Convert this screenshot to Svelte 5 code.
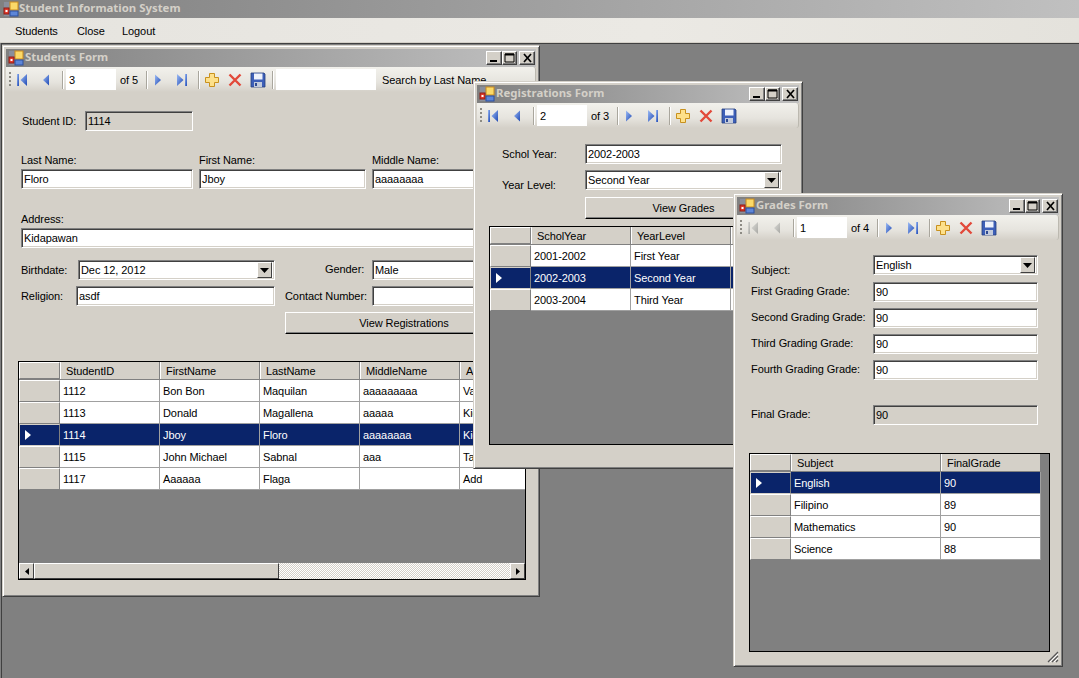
<script>
  const students = {
    cols: [['StudentID', 100], ['FirstName', 100], ['LastName', 100], ['MiddleName', 100], ['Address', 100]],
    rows: [
      ['1112', 'Bon Bon', 'Maquilan', 'aaaaaaaaa', 'Va'],
      ['1113', 'Donald', 'Magallena', 'aaaaa', 'Kidapawan'],
      ['1114', 'Jboy', 'Floro', 'aaaaaaaa', 'Kidapawan'],
      ['1115', 'John Michael', 'Sabnal', 'aaa', 'Ta'],
      ['1117', 'Aaaaaa', 'Flaga', '', 'Add']
    ],
    sel: 2
  };
  const regs = {
    cols: [['ScholYear', 100], ['YearLevel', 100], ['', 100]],
    rows: [
      ['2001-2002', 'First Year', ''],
      ['2002-2003', 'Second Year', ''],
      ['2003-2004', 'Third Year', '']
    ],
    sel: 1
  };
  const grades = {
    cols: [['Subject', 150], ['FinalGrade', 100]],
    rows: [
      ['English', '90'],
      ['Filipino', '89'],
      ['Mathematics', '90'],
      ['Science', '88']
    ],
    sel: 0
  };
  const gradeFields = [
    ['First Grading Grade:', '90', 'g-first'],
    ['Second Grading Grade:', '90', 'g-next'],
    ['Third Grading Grade:', '90', 'g-next'],
    ['Fourth Grading Grade:', '90', 'g-next']
  ];
</script>

{#snippet appIcon()}
  <svg class="appicon" viewBox="0 0 16 16" width="16" height="16">
    <rect x="1" y="1" width="14" height="14" fill="#8a8f9c" />
    <rect x="7" y="1" width="8" height="8" fill="#fbd968" stroke="#c98a1c" />
    <rect x="1" y="7" width="5" height="6" fill="#e23b2c" stroke="#8e1d14" />
    <rect x="7" y="10" width="8" height="5" fill="#5d86d8" stroke="#2c4f9e" />
    <rect x="2.500" y="9" width="2" height="2" fill="#fff" />
  </svg>
{/snippet}

{#snippet nav(kind, off)}
  {@const id = 'b' + kind + (off ? 'o' : 'n')}
  <svg class="tool" viewBox="0 0 16 16" width="16" height="16">
    <defs>
      <linearGradient {id} x1="0" x2="1" y1="0" y2="1">
        <stop offset="0" stop-color={off ? '#dcdcd8' : '#9dbcf5'} />
        <stop offset="1" stop-color={off ? '#a8a8a4' : '#1e48b4'} />
      </linearGradient>
    </defs>
    {#if kind === 'first'}
      <rect x="3" y="2" width="2" height="12" fill="url(#{id})" />
      <path d="M13 2v12L6.500 8z" fill="url(#{id})" />
    {:else if kind === 'prev'}
      <path d="M11 2.500v11L5 8z" fill="url(#{id})" />
    {:else if kind === 'next'}
      <path d="M5 2.500v11L11 8z" fill="url(#{id})" />
    {:else}
      <path d="M3 2v12L9.500 8z" fill="url(#{id})" />
      <rect x="11" y="2" width="2" height="12" fill="url(#{id})" />
    {/if}
  </svg>
{/snippet}

{#snippet actions()}
  <i class="sep"></i>
  <span class="tbtn act add"><svg class="tool" viewBox="0 0 16 16" width="16" height="16">
    <path d="M5.500 1.500h5v4h4v5h-4v4h-5v-4h-4v-5h4z" fill="#fde08a" stroke="#c8911e" />
  </svg></span>
  <span class="tbtn act"><svg class="tool" viewBox="0 0 16 16" width="16" height="16">
    <path d="M2.500 2.500l11 11M13.500 2.500l-11 11" stroke="#e2493a" stroke-width="2.400" fill="none" />
  </svg></span>
  <span class="tbtn act"><svg class="tool" viewBox="0 0 16 16" width="16" height="16">
    <path d="M1 1h13l1 1v13H1z" fill="#3d5fb8" stroke="#27407f" stroke-width=".8" />
    <rect x="4" y="1.500" width="8.500" height="6" fill="#eef2fb" />
    <rect x="4" y="10" width="8" height="5" fill="#c3cbdc" />
    <rect x="5" y="11" width="2" height="3" fill="#2f4a92" />
  </svg></span>
{/snippet}

{#snippet navbar(pos, total, firstOff, extra)}
  <div class="toolbar">
    <i class="grip"></i>
    <span class="tbtn">{@render nav('first', firstOff)}</span>
    <span class="tbtn">{@render nav('prev', firstOff)}</span>
    <i class="sep"></i>
    <span class="pos">{pos}</span>
    <span class="of">of {total}</span>
    <i class="sep"></i>
    <span class="tbtn">{@render nav('next', false)}</span>
    <span class="tbtn">{@render nav('last', false)}</span>
    {@render actions()}
    {#if extra}{@render extra()}{/if}
  </div>
{/snippet}

{#snippet caption(title)}
  <div class="caption">
    {@render appIcon()}
    <span class="captext">{title}</span>
    <span class="capbtns">
      <span class="capbtn wide"><svg viewBox="0 0 13 12" width="13" height="12"><rect x="2" y="8" width="7" height="2" fill="#000" /></svg></span>
      <span class="capbtn"><svg viewBox="0 0 13 12" width="13" height="12"><path d="M2 2h9v8H2z" fill="none" stroke="#000" /><rect x="2" y="1.500" width="9" height="2" fill="#000" /></svg></span>
      <span class="capbtn wide gap"><svg viewBox="0 0 13 12" width="13" height="12"><path d="M3 2l7 8M10 2l-7 8" stroke="#000" stroke-width="1.700" fill="none" /></svg></span>
    </span>
  </div>
{/snippet}

{#snippet combo(text, cls)}
  <div class="sunken combo {cls}">
    <span>{text}</span>
    <span class="arrow"><svg viewBox="0 0 9 5" width="9" height="5"><path d="M0 0h9L4.500 5z" fill="#000" /></svg></span>
  </div>
{/snippet}

{#snippet table(data, cls)}
  <div class="grid {cls}">
    <div class="tr head">
      <div class="rh"></div>
      {#each data.cols as c}
        <div class="th" style="width:{c[1]}px">{c[0]}</div>
      {/each}
    </div>
    {#each data.rows as r, i}
      <div class="tr" class:sel={i === data.sel}>
        <div class="rh">
          {#if i === data.sel}
            <svg viewBox="0 0 6 10" width="6" height="10"><path d="M0 0l6 5-6 5z" fill="#fff" /></svg>
          {/if}
        </div>
        {#each r as v, j}
          <div class="td" style="width:{data.cols[j][1]}px">{v}</div>
        {/each}
      </div>
    {/each}
    {#if cls === 'g-students'}
      <div class="hscroll">
        <span class="sbtn"><svg viewBox="0 0 4 7" width="4" height="7"><path d="M4 0v7L0 3.500z" fill="#000" /></svg></span>
        <span class="thumb"></span>
        <span class="track"></span>
        <span class="sbtn"><svg viewBox="0 0 4 7" width="4" height="7"><path d="M0 0v7l4-3.500z" fill="#000" /></svg></span>
      </div>
    {/if}
  </div>
{/snippet}

{#snippet searchBox()}
  <i class="sep last"></i>
  <span class="pos search"></span>
  <span class="searchlabel">Search by Last Name</span>
{/snippet}

<div class="app">
  <header class="titlebar">
    {@render appIcon()}
    <span class="captext">Student Information System</span>
  </header>
  <nav class="menu">
    <span class="m1">Students</span>
    <span class="m2">Close</span>
    <span class="m3">Logout</span>
  </nav>

  <main class="mdi">
    <section class="win w-students">
      {@render caption('Students Form')}
      {@render navbar(3, 5, false, searchBox)}
      <div class="body">
        <div class="row s1">
          <span class="l-id">Student ID:</span>
          <div class="sunken ro f-id">1114</div>
        </div>
        <div class="row s2">
          <span class="c1">Last Name:</span>
          <span class="c2">First Name:</span>
          <span>Middle Name:</span>
        </div>
        <div class="row s3">
          <div class="sunken f-last">Floro</div>
          <div class="sunken f-first">Jboy</div>
          <div class="sunken f-mid">aaaaaaaa</div>
        </div>
        <div class="row s4"><span>Address:</span></div>
        <div class="row s5"><div class="sunken f-addr">Kidapawan</div></div>
        <div class="row s6">
          <span class="l-birth">Birthdate:</span>
          {@render combo('Dec 12, 2012', 'f-birth')}
          <span class="l-gender up">Gender:</span>
          <div class="sunken f-gender">Male</div>
        </div>
        <div class="row s7">
          <span class="l-rel">Religion:</span>
          <div class="sunken f-rel">asdf</div>
          <span class="l-contact">Contact Number:</span>
          <div class="sunken f-contact"></div>
        </div>
        <div class="row s8"><button class="btn b-reg">View Registrations</button></div>
        {@render table(students, 'g-students')}
      </div>
    </section>

    <section class="win w-regs">
      {@render caption('Registrations Form')}
      {@render navbar(2, 3, false)}
      <div class="body">
        <div class="row r1">
          <span class="l-sy">Schol Year:</span>
          <div class="sunken f-sy">2002-2003</div>
        </div>
        <div class="row r2">
          <span class="l-sy low">Year Level:</span>
          {@render combo('Second Year', 'f-sy')}
        </div>
        <div class="row r3"><button class="btn b-gr">View Grades</button></div>
        {@render table(regs, 'g-regs')}
      </div>
    </section>

    <section class="win w-grades">
      {@render caption('Grades Form')}
      {@render navbar(1, 4, true)}
      <div class="body">
        <div class="row g1">
          <span class="l-g low">Subject:</span>
          {@render combo('English', 'f-g')}
        </div>
        {#each gradeFields as f}
          <div class="row {f[2]}">
            <span class="l-g up">{f[0]}</span>
            <div class="sunken f-g">{f[1]}</div>
          </div>
        {/each}
        <div class="row g-final">
          <span class="l-g up">Final Grade:</span>
          <div class="sunken ro f-g">90</div>
        </div>
        {@render table(grades, 'g-grades')}
        <svg class="sizegrip" viewBox="0 0 13 13" width="13" height="13">
          <path d="M12 2L2 12M12 6L6 12M12 10l-2 2" stroke="#555" stroke-width="1.200" fill="none" />
          <path d="M12 4L4 12M12 8l-4 4" stroke="#fff" stroke-width="1" fill="none" />
        </svg>
      </div>
    </section>
  </main>
</div>

<style>
  :global(body) { margin: 0; background: #808080; }
  .app {
    width: 1079px; height: 678px; display: flex; flex-direction: column; overflow: hidden;
    font-family: "Liberation Sans", Arial, sans-serif; font-size: 11px; letter-spacing: -.08px; color: #000;
  }
  .titlebar {
    height: 18px; flex: none; display: flex; align-items: center; padding-left: 3px; box-sizing: border-box;
    background: linear-gradient(90deg, #808080, #c0c0c0);
  }
  .appicon { flex: none; }
  .captext {
    font-family: "Noto Sans", "DejaVu Sans", sans-serif; font-weight: 700; font-size: 11.4px; color: #d4d0c8;
    white-space: nowrap; padding-bottom: 3px; line-height: 15px; letter-spacing: 0;
  }
  .menu {
    height: 25px; flex: none; box-sizing: border-box; display: flex; align-items: center; padding: 1px 0 0 15px;
    background: linear-gradient(90deg, #e6e4df, #ebe9e4 60%, #e4e2dc); border-bottom: 1px solid #d4d0c8;
  }
  .m1 { width: 62px; }
  .m2 { width: 45px; }
  .mdi {
    flex: 1; position: relative; background: #808080; overflow: hidden;
    border-top: 1px solid #404040; border-left: 1px solid #404040; margin-left: 1px;
  }
  .win {
    position: absolute; box-sizing: border-box; background: #d4d0c8; display: flex; flex-direction: column;
    padding: 3px; border: 1px solid; border-color: #d4d0c8 #404040 #404040 #d4d0c8;
    box-shadow: inset 1px 1px 0 #fff, inset -1px -1px 0 #808080;
  }
  .w-students { left: 0; top: 1px; width: 538px; height: 552px; }
  .w-regs { left: 471px; top: 37px; width: 330px; height: 388px; }
  .w-grades { left: 731px; top: 149px; width: 330px; height: 474px; }
  .caption {
    height: 18px; flex: none; display: flex; align-items: center; gap: 1px; padding-left: 2px;
    background: linear-gradient(90deg, #808080, #c0c0c0);
  }
  .capbtns { margin-left: auto; display: flex; padding-right: 1px; }
  .capbtn {
    width: 15px; height: 14px; box-sizing: border-box; background: #d4d0c8; display: flex;
    align-items: center; justify-content: center; border: 1px solid; border-color: #fff #404040 #404040 #fff;
    box-shadow: inset -1px -1px 0 #808080;
  }
  .capbtn.wide { width: 16px; }
  .capbtn.gap { margin-left: 2px; }
  .toolbar {
    height: 25px; flex: none; box-sizing: border-box; display: flex; align-items: center;
    background: linear-gradient(180deg, #f2f1ec, #e6e4de 60%, #d4d0c8); border-radius: 0 3px 3px 0;
    border-right: 1px solid #bcb9b0; padding-left: 3px;
  }
  .grip {
    width: 2px; height: 16px; margin-right: 3px; flex: none;
    background: repeating-linear-gradient(180deg, #8d8b84 0 2px, transparent 2px 4px);
  }
  .tbtn { width: 16px; height: 22px; margin-right: 8px; display: flex; align-items: center; justify-content: center; flex: none; }
  .tbtn.act { margin-right: 7px; }
  .tbtn.add { margin-left: 2px; }
  .sep { width: 1px; height: 18px; background: #a9a69d; box-shadow: 1px 0 0 #fff; flex: none; margin-right: 3px; }
  .sep.last { margin-left: -1px; }
  .pos {
    width: 50px; height: 21px; box-sizing: border-box; padding: 4px 3px 0; background: #fff; flex: none; line-height: 14px;
  }
  .of { width: 30px; padding-left: 4px; box-sizing: border-box; flex: none; white-space: nowrap; }
  .search { width: 100px; }
  .searchlabel { margin-left: 6px; white-space: nowrap; }

  .body { flex: 1; position: relative; min-height: 0; }
  .row { display: flex; align-items: center; }
  .row > span { white-space: nowrap; flex: none; }
  .low { align-self: flex-end; margin-bottom: -1px; }
  .up { padding-bottom: 2px; }
  .sunken {
    height: 20px; box-sizing: border-box; background: #fff; flex: none; padding: 2px 2px 0; line-height: 14px;
    border: 1px solid; border-color: #808080 #fff #fff #808080; white-space: nowrap; overflow: hidden;
    box-shadow: inset 1px 1px 0 #404040, inset -1px -1px 0 #d4d0c8;
  }
  .sunken.ro { background: #d4d0c8; }
  .combo { display: flex; justify-content: space-between; padding-right: 2px; }
  .arrow {
    width: 15px; height: 16px; box-sizing: border-box; background: #d4d0c8; display: flex; align-items: center; justify-content: center;
    border: 1px solid; border-color: #fff #404040 #404040 #fff; margin-top: -1px;
  }
  .btn {
    height: 22px; box-sizing: border-box; background: #d4d0c8; font: inherit; letter-spacing: inherit; padding: 0; color: #000;
    border: 1px solid; border-color: #fff #000 #000 #fff; box-shadow: inset -1px -1px 0 #808080;
    display: block;
  }

  /* Students form */
  .s1 { padding: 19px 0 0 16px; }
  .l-id { width: 63px; }
  .f-id { width: 108px; }
  .s2 { padding: 22px 0 0 15px; height: 13px; }
  .c1 { width: 178px; }
  .c2 { width: 173px; }
  .s3 { padding: 3px 0 0 15px; }
  .f-last { width: 172px; margin-right: 6px; }
  .f-first { width: 167px; margin-right: 6px; }
  .f-mid { width: 150px; }
  .s4 { padding: 23px 0 0 15px; height: 13px; }
  .s5 { padding: 3px 0 0 15px; }
  .f-addr { width: 490px; }
  .s6 { padding: 11px 0 0 15px; }
  .l-birth { width: 57px; }
  .f-birth { width: 197px; margin-top: 1px; }
  .l-gender { margin-left: 50px; width: 47px; }
  .f-gender { width: 150px; }
  .s7 { padding: 6px 0 0 15px; }
  .l-rel { width: 55px; }
  .f-rel { width: 199px; }
  .l-contact { margin-left: 10px; width: 87px; }
  .f-contact { width: 150px; }
  .s8 { padding: 6px 0 0 279px; }
  .b-reg { width: 238px; }

  /* Registrations form */
  .r1 { padding: 16px 0 0 25px; }
  .r2 { padding: 6px 0 0 25px; }
  .r3 { padding: 7px 0 0 108px; }
  .l-sy { width: 83px; }
  .f-sy { width: 197px; }
  .b-gr { width: 197px; }

  /* Grades form */
  .g1 { padding: 15px 0 0 14px; }
  .g-first { padding: 7px 0 0 14px; }
  .g-next { padding: 6px 0 0 14px; }
  .g-final { padding: 25px 0 0 14px; }
  .l-g { width: 122px; }
  .f-g { width: 165px; }
  .sizegrip { position: absolute; right: 0; bottom: 0; }

  /* Data grids */
  .grid {
    position: relative; box-sizing: border-box; background: #808080; overflow: hidden;
    border: 1px solid #000; margin-left: 12px;
  }
  .g-students { width: 508px; height: 219px; margin-top: 27px; }
  .g-regs { width: 301px; height: 219px; margin-top: 7px; }
  .g-grades { width: 301px; height: 199px; margin-top: 28px; }
  .tr { display: flex; height: 22px; background: #fff; width: max-content; }
  .tr.head { height: 18px; box-sizing: border-box; background: #d4d0c8; border-bottom: 1px solid #808080; }
  .rh {
    width: 41px; flex: none; box-sizing: border-box; background: #d4d0c8; display: flex; align-items: center;
    padding-left: 5px; border-top: 1px solid #fff; border-left: 1px solid #fff; border-bottom: 1px solid #808080;
    border-right: 1px solid #808080;
  }
  .th {
    box-sizing: border-box; flex: none; padding: 2px 0 0 6px; line-height: 15px; white-space: nowrap;
    border-right: 1px solid #808080; box-shadow: inset 1px 0 0 #fff;
  }
  .td {
    box-sizing: border-box; flex: none; padding: 1px 0 0 3px; line-height: 20px; height: 22px; white-space: nowrap; overflow: hidden;
    border-right: 1px solid #a0a0a0; border-bottom: 1px solid #a0a0a0;
  }
  .tr.sel { background: #0a246a; color: #fff; }
  .tr.sel .rh { background: #0a246a; border-color: #d4d0c8 #808080 #d4d0c8 #d4d0c8; }
  .hscroll { position: absolute; left: 0; right: 0; bottom: 0; height: 16px; display: flex; background: #d4d0c8; }
  .sbtn {
    width: 15px; flex: none; box-sizing: border-box; background: #d4d0c8; display: flex; align-items: center; justify-content: center;
    border: 1px solid; border-color: #fff #404040 #404040 #fff;
  }
  .thumb {
    width: 245px; flex: none; box-sizing: border-box; background: #d4d0c8;
    border: 1px solid; border-color: #fff #404040 #404040 #fff;
  }
  .track {
    flex: 1;
    background: repeating-conic-gradient(#d4d0c8 0 25%, #fff 0 50%) 0 0 / 2px 2px;
  }
</style>
